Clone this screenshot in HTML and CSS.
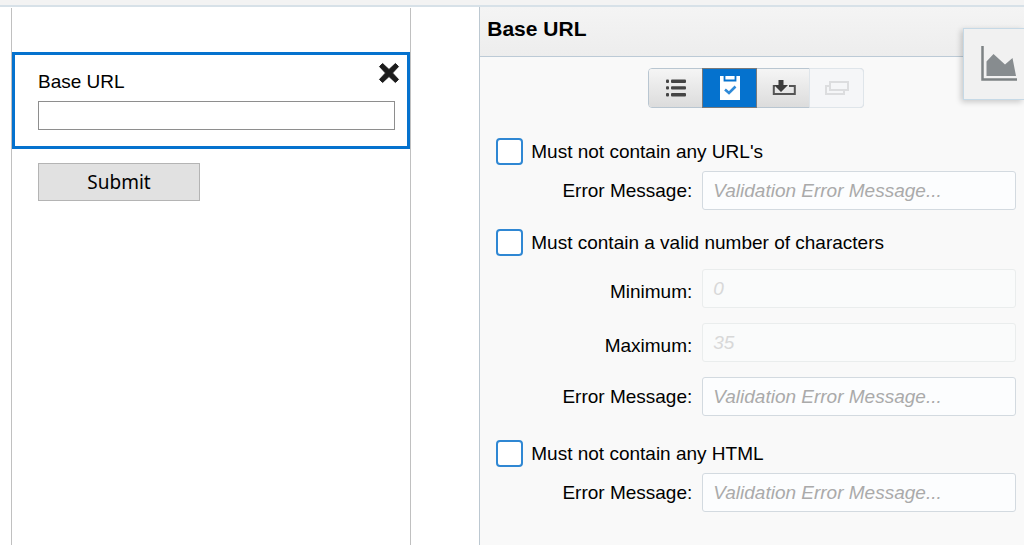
FILE: index.html
```html
<!DOCTYPE html>
<html lang="en">
<head>
<meta charset="utf-8">
<meta name="viewport" content="width=device-width, initial-scale=1">
<title>Form editor</title>
<link rel="stylesheet" href="styles.css">
</head>
<body>
<div class="topbar"></div>
<div class="workspace">
  <main class="canvas">
    <form class="form-page">
      <div class="field selected">
        <label for="base-url">Base URL</label>
        <input class="text-box" id="base-url" type="text">
        <button class="remove" type="button" aria-label="Remove field">
          <svg viewBox="0 0 22 22" width="22" height="22"><path d="M4.600 1.500 11 7.500 17.400 1.500 20.500 4.600 14.500 11 20.500 17.400 17.400 20.500 11 14.500 4.600 20.500 1.500 17.400 7.500 11 1.500 4.600z" fill="#1c1c1c" stroke="#1c1c1c" stroke-linejoin="round"/></svg>
        </button>
      </div>
      <button class="submit" type="button">Submit</button>
    </form>
  </main>
  <aside class="panel">
    <h2 class="panel-title">Base URL</h2>
    <div class="tabs">
      <button class="tab" type="button" aria-label="Settings">
        <svg viewBox="0 0 22 20" width="22" height="20" fill="#444"><rect x="1" y="1.500" width="3" height="3.400" rx="1"/><rect x="1" y="8.200" width="3" height="3.400" rx="1"/><rect x="1" y="15" width="3" height="3.400" rx="1"/><rect x="6" y="1.500" width="15" height="3.400" rx="1"/><rect x="6" y="8.200" width="15" height="3.400" rx="1"/><rect x="6" y="15" width="15" height="3.400" rx="1"/></svg>
      </button>
      <button class="tab active" type="button" aria-label="Validation">
        <svg viewBox="0 0 22 24" width="22" height="24"><path d="M1 0h20v24H1z" fill="#fff"/><path d="M5.500 0v4.500h11V0" fill="none" stroke="#0572ce" stroke-width="1.800"/><path d="M6 13.500 10 17l6.500-6.500" fill="none" stroke="#2f8ad8" stroke-width="2.600"/></svg>
      </button>
      <button class="tab" type="button" aria-label="Processing">
        <svg viewBox="0 0 24 18" width="24" height="18"><path d="M3 7H1.800v8h21V7H17" fill="none" stroke="#555" stroke-width="2"/><path d="M6.500 1h5v5H16l-7 7-7-7h4.500z" fill="#3c3c3c"/></svg>
      </button>
      <button class="tab" type="button" aria-label="Layers" disabled>
        <svg viewBox="0 0 24 16" width="24" height="16" fill="none" stroke="#dcdddf" stroke-width="2"><path d="M5 2h18v8H5zM5 6H1v8h18v-4"/></svg>
      </button>
    </div>
    <div class="rules">
      <section class="rule">
        <label class="check"><input type="checkbox">Must not contain any URL's</label>
        <div class="row"><label for="url-error">Error Message:</label><input class="entry" id="url-error" type="text" placeholder="Validation Error Message..."></div>
      </section>
      <section class="rule">
        <label class="check"><input type="checkbox">Must contain a valid number of characters</label>
        <div class="limits">
          <div class="row low"><label for="min">Minimum:</label><input class="entry" id="min" type="text" placeholder="0" disabled></div>
          <div class="row low"><label for="max">Maximum:</label><input class="entry" id="max" type="text" placeholder="35" disabled></div>
          <div class="row"><label for="length-error">Error Message:</label><input class="entry" id="length-error" type="text" placeholder="Validation Error Message..."></div>
        </div>
      </section>
      <section class="rule">
        <label class="check"><input type="checkbox">Must not contain any HTML</label>
        <div class="row"><label for="html-error">Error Message:</label><input class="entry" id="html-error" type="text" placeholder="Validation Error Message..."></div>
      </section>
    </div>
    <button class="chart-toggle" type="button" aria-label="Show analytics">
      <svg viewBox="0 0 36 36" width="36" height="36"><path d="M1.500 0v33.500H36" fill="none" stroke="#7d8284" stroke-width="2.500"/><path d="M5.500 15.500 12.500 8 24 18.500 31.500 12 35 30H5.500z" fill="#878c8f"/></svg>
    </button>
  </aside>
</div>
</body>
</html>
```
FILE: styles.css
```css
* {
  box-sizing: border-box;
}

body {
  margin: 0;
  min-height: 100vh;
  display: flex;
  flex-direction: column;
  overflow-x: hidden;
  background: #fff;
  color: #000;
  font: 19px/24px "Liberation Sans", Arial, sans-serif;
}

button,
input {
  font: inherit;
  color: inherit;
}

button {
  padding: 0;
}

.topbar {
  height: 7px;
  background: #f3f3f3;
  border-bottom: 2px solid #d7e1e8;
}

.workspace {
  flex: 1;
  display: grid;
  grid-template-columns: 47fr 53fr;
}

.canvas {
  display: flex;
  padding: 1px 70px 0 11px;
}

.form-page {
  flex: 1;
  min-width: 0;
  padding-top: 44px;
  border: solid #c0c0c0;
  border-width: 0 1px;
}

.selected {
  position: relative;
  display: flex;
  flex-direction: column;
  gap: 7px;
  padding: 15px 12px 16px 23px;
  border: 3px solid #0572ce;
}

.text-box {
  width: 100%;
  height: 29px;
  padding: 0 6px;
  background: #fff;
  border: 1px solid #8e8e8e;
}

.remove {
  position: absolute;
  top: 7px;
  right: 7px;
  width: 22px;
  height: 22px;
  border: 0;
  background: none;
}

svg {
  display: block;
}

.submit {
  display: block;
  width: 162px;
  height: 38px;
  margin: 14px 26px;
  background: #e1e1e1;
  border: 1px solid #b4b4b4;
  font-family: "Noto Sans", "Open Sans", sans-serif;
}

.panel {
  position: relative;
  min-width: 0;
  margin-left: -2px;
  background: #f9f9f9;
  border-left: 1px solid #bcc8d1;
}

.panel-title {
  margin: 0;
  padding: 10px 7px 15px;
  font-size: 21px;
  line-height: 24px;
  background: linear-gradient(#f4f4f4, #ededed);
  border-bottom: 1px solid #bccad6;
}

.tabs {
  display: flex;
  width: 216px;
  height: 40px;
  margin: 11px auto 0 168px;
  border: 1px solid #b9c6d1;
  border-radius: 4px;
}

.tab {
  flex: 1;
  display: flex;
  align-items: center;
  justify-content: center;
  border: 0;
  border-radius: 3px 0 0 3px;
  background: linear-gradient(#f5f5f5, #dcdcdc);
}

.tab + .tab {
  border-radius: 0;
}

.tab.active {
  margin: -1px 0;
  background: #0572ce;
  border: 1px solid #77797b;
}

.tab:disabled {
  margin: -1px;
  background: #f5f6f8;
  border: 1px solid #dfe5ea;
  border-radius: 0 4px 4px 0;
}

.rules {
  display: flex;
  flex-direction: column;
  gap: 19px;
  padding: 30px 8px 32px 16px;
}

.rule {
  display: flex;
  flex-direction: column;
  gap: 6px;
}

.check {
  display: flex;
  align-items: center;
  gap: 8px;
}

.check input {
  appearance: none;
  width: 27px;
  height: 27px;
  margin: 0;
  background: #fff;
  border: 2px solid #2f87d3;
  border-radius: 4px;
}

.check input:checked {
  background: #0572ce;
}

.row {
  display: grid;
  grid-template-columns: 196px 1fr;
  align-items: center;
  column-gap: 10px;
}

.row label {
  text-align: right;
}

.low label {
  padding-top: 7px;
}

.limits {
  display: flex;
  flex-direction: column;
  gap: 15px;
  padding: 7px 0 5px;
}

.entry {
  width: 100%;
  height: 39px;
  padding: 0 10px;
  background: #fcfdfe;
  border: 1px solid #d3dae0;
  border-radius: 3px;
}

.entry::placeholder {
  color: #aaa;
  font-style: italic;
  opacity: 1;
}

.entry:disabled {
  background: #fafbfb;
  border-color: #eaeded;
}

.entry:disabled::placeholder {
  color: #d8d8d8;
}

.chart-toggle {
  position: absolute;
  top: 21px;
  right: 0;
  width: 61px;
  height: 72px;
  padding-left: 17px;
  background: #f1f1f1;
  border: 1px solid #c6d9e6;
  border-right: 0;
  box-shadow: -2px 2px 6px rgba(0, 0, 0, 0.2);
}
```
